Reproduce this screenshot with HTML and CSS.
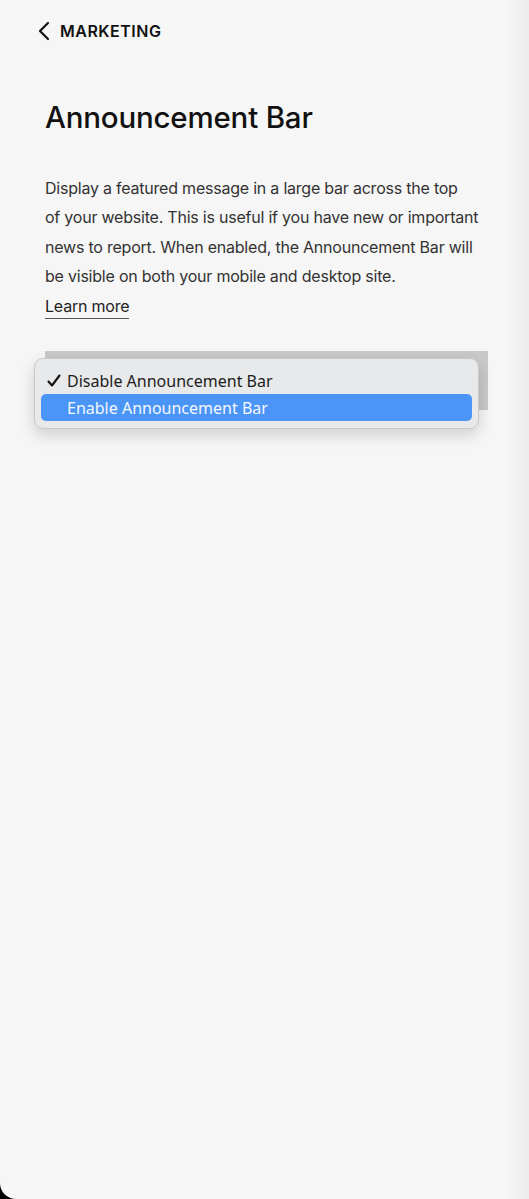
FILE: index.html
```html
<!DOCTYPE html>
<html lang="en">
<head>
    <meta charset="UTF-8">
    <meta name="viewport" content="width=device-width, initial-scale=1.0">
    <title>Announcement Bar</title>
    <link rel="stylesheet" href="styles.css">
</head>
<body>
    <!-- Back link -->
    <a class="back-link" href="#">
        <svg class="back-icon" width="14" height="20" viewBox="0 0 14 20">
            <path d="M11 2 L3 10 L11 18" fill="none" stroke="#111" stroke-width="2.2" stroke-linecap="round" stroke-linejoin="round"/>
        </svg>
        <span>MARKETING</span>
    </a>

    <div class="panel">
        <h1>Announcement Bar</h1>
        <p class="intro">Display a featured message in a large bar across the top of&nbsp;your website. This is useful if you have new or important news to report. When enabled, the Announcement Bar will be visible on both your mobile and desktop site.</p>
        <a class="learn-more" href="#">Learn more</a>

        <div class="select-wrap">
            <div class="select-field"></div>
            <ul class="select-menu">
                <li class="option checked">
                    <svg class="tick" width="14" height="14" viewBox="0 0 14 14">
                        <path d="M1.5 7.5 L5 11.5 L12.5 1.5" fill="none" stroke="#111" stroke-width="2.1" stroke-linecap="round" stroke-linejoin="round"/>
                    </svg>
                    Disable Announcement Bar
                </li>
                <li class="option active"><span class="tick"></span>Enable Announcement Bar</li>
            </ul>
        </div>
    </div>
</body>
</html>
```

FILE: styles.css
```css
html {
    background: #000;
    height: 100%;
}

body {
    font-family: 'Inter', 'Liberation Sans', sans-serif;
    background: linear-gradient(to right, #f6f6f6 calc(100% - 26px), #ededed);
    color: #111;
    margin: 0;
    padding: 0;
    min-height: 100vh;
    border-bottom-left-radius: 16px;
}

.back-link {
    display: flex;
    align-items: center;
    gap: 9px;
    padding: 21px 0 0 37px;
    text-decoration: none;
    color: #111;
    font-size: 16px;
    font-weight: 600;
    letter-spacing: 0.5px;
}

.back-icon {
    display: block;
}

.panel {
    padding: 0 40px 0 45px;
}

h1 {
    font-size: 29.5px;
    font-weight: 500;
    letter-spacing: -0.2px;
    margin: 56px 0 0;
    line-height: 40px;
}

.intro {
    max-width: 440px;
    font-size: 16px;
    letter-spacing: -0.22px;
    line-height: 29.3px;
    color: #333;
    margin: 37px 0 0;
}

.learn-more {
    display: inline-block;
    font-size: 16px;
    letter-spacing: -0.2px;
    line-height: 24px;
    color: #222;
    text-decoration: none;
    border-bottom: 1.5px solid #555;
    margin-top: 3px;
}

.select-wrap {
    position: relative;
    margin-top: 32px;
    width: 443px;
}

.select-field {
    height: 59px;
    background: #c9c9c9;
}

.select-menu {
    position: absolute;
    top: 7px;
    left: -11px;
    width: 431px;
    margin: 0;
    padding: 8px 6px 7px;
    list-style: none;
    background: #e8e9ea;
    border: 1px solid #c9c9c9;
    border-radius: 9px;
    box-shadow: 0 6px 16px rgba(0, 0, 0, 0.16);
    font-family: 'Noto Sans', 'Liberation Sans', sans-serif;
    font-size: 16px;
}

.option {
    display: flex;
    align-items: center;
    height: 27px;
    padding-left: 6px;
    border-radius: 5px;
    color: #1c1c1c;
}

.tick {
    display: block;
    width: 14px;
    margin-right: 6px;
}

.option.active {
    background: #4b95f6;
    color: #f4f8ff;
}
```
